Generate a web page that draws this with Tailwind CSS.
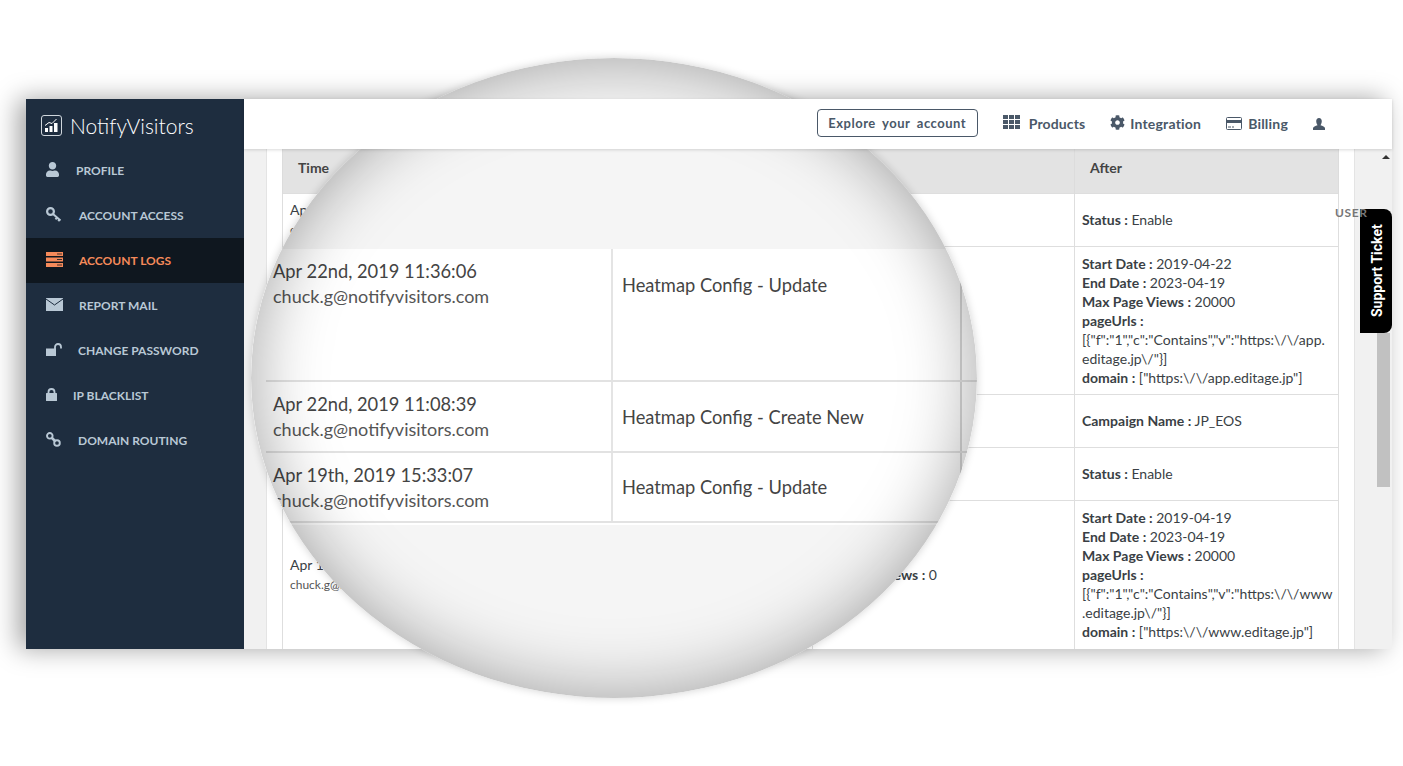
<!DOCTYPE html>
<html lang="en">
<head>
    <meta charset="UTF-8">
    <title>NotifyVisitors - Account Logs</title>
    <script src="https://cdn.jsdelivr.net/npm/@tailwindcss/browser@4"></script>
</head>
<body class="bg-white font-['Lato','Liberation_Sans',sans-serif] text-[#333]">
<div class="relative w-[1403px] h-[766px] overflow-hidden pt-[99px] pl-[26px]">

    <!-- app window -->
    <div class="relative flex w-[1366px] h-[550px] bg-white shadow-[-8px_0_24px_rgba(0,0,0,0.36)]">

        <!-- sidebar -->
        <aside class="w-[218px] shrink-0 bg-[#1e2d3f] text-[#b9c8d5]">
            <div class="flex items-center h-[49px] pl-[15px] pt-[3px]">
                <svg class="w-[21px] h-[21px]" viewBox="0 0 21 21" fill="none">
                    <rect x="0.5" y="0.5" width="20" height="20" rx="2.5" stroke="#cfd6dc"/>
                    <path d="M4 17h3v-4H4zM8.500 17h3v-6h-3zM13 17h3.500V8H13z" fill="#fff"/>
                    <path d="M4 10.500l4-3 3 1 4.500-4.500" stroke="#fff"/>
                </svg>
                <span class="ml-[8px] text-[21px] font-light text-white leading-none">NotifyVisitors</span>
            </div>
            <nav class="text-[12px] font-bold">
                <a class="flex items-center h-[45px] pl-[20px]">
                    <svg class="w-[13px] h-[15px] -mt-[3px]" viewBox="0 0 448 512" fill="#b9c8d5"><path d="M224 256c70.700 0 128-57.300 128-128S294.700 0 224 0 96 57.300 96 128s57.300 128 128 128zm89.600 32h-16.700c-22.200 10.200-46.900 16-72.900 16s-50.600-5.800-72.900-16h-16.700C60.200 288 0 348.200 0 422.400V464c0 26.500 21.500 48 48 48h352c26.500 0 48-21.500 48-48v-41.600c0-74.200-60.200-134.400-134.400-134.400z"/></svg>
                    <span class="ml-[17px]">PROFILE</span>
                </a>
                <a class="flex items-center h-[45px] pl-[20px]">
                    <svg class="w-[16px] h-[15px] -mt-[3px]" viewBox="0 0 16 15" fill="none" stroke="#b9c8d5"><circle cx="4.500" cy="4.500" r="3.400" stroke-width="2.200"/><path d="M7 7l7.500 6.500M11 10.500l-1.500 1.800M13.500 12.500l-1.300 1.500" stroke-width="2"/></svg>
                    <span class="ml-[17px]">ACCOUNT ACCESS</span>
                </a>
                <a class="flex items-center h-[45px] pl-[20px] bg-[#0f171f] text-[#f58a5a]">
                    <svg class="w-[17px] h-[15px] -mt-[3px]" viewBox="0 0 17 15" fill="#f58a5a"><path d="M0 0h17v4H0zM0 5.500h17v4H0zM0 11h17v4H0z"/><path d="M11 2h5M11 7.500h5M11 13h5" stroke="#0f171f" stroke-width="0.800"/></svg>
                    <span class="ml-[16px]">ACCOUNT LOGS</span>
                </a>
                <a class="flex items-center h-[45px] pl-[20px]">
                    <svg class="w-[17px] h-[13px] -mt-[3px]" viewBox="0 0 17 13" fill="#b9c8d5"><rect width="17" height="13"/><path d="M0 1l8.500 6L17 1" fill="none" stroke="#1e2d3f"/></svg>
                    <span class="ml-[16px]">REPORT MAIL</span>
                </a>
                <a class="flex items-center h-[45px] pl-[20px]">
                    <svg class="w-[16px] h-[13px] -mt-[3px]" viewBox="0 0 16 13"><rect y="5.500" width="10" height="7.500" fill="#b9c8d5"/><path d="M9 6V4a3 3 0 0 1 6 0v1.500" fill="none" stroke="#b9c8d5" stroke-width="1.800"/></svg>
                    <span class="ml-[16px]">CHANGE PASSWORD</span>
                </a>
                <a class="flex items-center h-[45px] pl-[20px]">
                    <svg class="w-[11px] h-[13px] -mt-[3px]" viewBox="0 0 11 13"><rect y="5" width="11" height="8" rx="0.500" fill="#b9c8d5"/><path d="M2.500 6V4a3 3 0 0 1 6 0v2" fill="none" stroke="#b9c8d5" stroke-width="1.800"/></svg>
                    <span class="ml-[16px]">IP BLACKLIST</span>
                </a>
                <a class="flex items-center h-[45px] pl-[20px]">
                    <svg class="w-[15px] h-[15px] -mt-[3px]" viewBox="0 0 15 15" fill="none" stroke="#b9c8d5" stroke-width="1.900"><circle cx="3.800" cy="3.800" r="2.800"/><circle cx="11" cy="11" r="2.800"/><path d="M5.500 5.500l4 4" stroke-width="2.500"/></svg>
                    <span class="ml-[17px]">DOMAIN ROUTING</span>
                </a>
            </nav>
        </aside>

        <!-- right side -->
        <div class="flex-1 flex flex-col min-w-0">
            <header class="relative z-10 flex items-center justify-end h-[50px] shrink-0 bg-white shadow-[0_1px_3px_rgba(0,0,0,0.15)] text-[14px] font-bold text-[#4a5868] pr-[67px] pb-[2px]">
                <button class="h-[28px] w-[161px] pt-[2px] border border-[#4a5868] rounded-[4px] text-[13px] tracking-[0.5px] [word-spacing:3px]">Explore your account</button>
                <svg class="ml-[25px] w-[17px] h-[14px] -mt-[3px]" viewBox="0 0 17 14" fill="#4a5868"><path d="M0 0h5v4H0zM6 0h5v4H6zM12 0h5v4h-5zM0 5h5v4H0zM6 5h5v4H6zM12 5h5v4h-5zM0 10h5v4H0zM6 10h5v4H6zM12 10h5v4h-5z"/></svg>
                <span class="ml-[9px] tracking-[0.12px]">Products</span>
                <svg class="ml-[25px] w-[15px] h-[15px] -mt-[2px]" viewBox="0 0 512 512" fill="#4a5868"><path d="M487.400 315.700l-42.600-24.600c4.300-23.200 4.300-47 0-70.200l42.600-24.600c4.900-2.800 7.100-8.600 5.500-14-11.100-35.600-30-67.800-54.700-94.600-3.800-4.100-10-5.100-14.800-2.300L380.800 110c-17.900-15.400-38.500-27.300-60.800-35.100V25.800c0-5.600-3.900-10.500-9.400-11.700-36.700-8.200-74.300-7.800-109.200 0-5.500 1.200-9.400 6.100-9.400 11.700V75c-22.200 7.900-42.800 19.800-60.800 35.100L88.700 85.500c-4.900-2.800-11-1.900-14.800 2.300-24.700 26.700-43.600 58.900-54.700 94.600-1.700 5.400.6 11.200 5.500 14L67.300 221c-4.300 23.200-4.300 47 0 70.200l-42.600 24.600c-4.900 2.800-7.100 8.600-5.500 14 11.100 35.600 30 67.800 54.700 94.600 3.800 4.100 10 5.100 14.800 2.300l42.600-24.600c17.900 15.400 38.500 27.300 60.800 35.100v49.200c0 5.600 3.900 10.500 9.400 11.700 36.700 8.200 74.300 7.800 109.200 0 5.500-1.200 9.400-6.100 9.400-11.700v-49.200c22.200-7.900 42.800-19.800 60.800-35.100l42.600 24.600c4.900 2.800 11 1.900 14.800-2.300 24.700-26.700 43.600-58.900 54.700-94.600 1.500-5.500-.7-11.300-5.600-14.100zM256 336c-44.100 0-80-35.900-80-80s35.900-80 80-80 80 35.900 80 80-35.900 80-80 80z"/></svg>
                <span class="ml-[5px] tracking-[0.2px]">Integration</span>
                <svg class="ml-[25px] w-[16px] h-[13px] mt-[1px]" viewBox="0 0 16 13" fill="none"><rect x="0.500" y="0.500" width="15" height="12" rx="1" stroke="#4a5868"/><path d="M0 3h16v3H0z" fill="#4a5868"/><path d="M2 10h3M6 10h2" stroke="#4a5868"/></svg>
                <span class="ml-[6px] tracking-[0.2px]">Billing</span>
                <svg class="ml-[25px] w-[12px] h-[12px] mt-[1px]" viewBox="0 0 12 12" fill="#4a5868"><path d="M6 0c1.800 0 2.800 1.300 2.800 3.200S7.800 6.500 7.500 7.300c2 .6 4.500 1.500 4.500 3V12H0v-1.700c0-1.500 2.500-2.400 4.500-3C4.200 6.500 3.200 5 3.200 3.200S4.200 0 6 0z"/></svg>
            </header>

            <div class="flex flex-1 min-h-0 overflow-hidden">
                <div class="w-[23px] shrink-0 bg-[#f1f1f1] border-r border-[#e4e4e4]"></div>
                <div class="w-[1087px] shrink-0 bg-white pl-[15px]">
                    <table class="table-fixed border-collapse w-[1056px] text-[14px] leading-[19px] text-[#3a3f45]">
                        <colgroup><col class="w-[300px]"><col class="w-[230px]"><col class="w-[262px]"><col class="w-[264px]"></colgroup>
                        <thead>
                            <tr class="h-[44px] bg-[#e3e3e3] font-bold text-[#444]">
                                <th class="px-[15px] pb-[6px] text-left border-x border-[#dcdcdc]">Time</th>
                                <th class="border-x border-[#dcdcdc]"></th>
                                <th class="border-x border-[#dcdcdc]"></th>
                                <th class="px-[15px] pb-[6px] text-left border-x border-[#dcdcdc]">After</th>
                            </tr>
                        </thead>
                        <tbody>
                            <tr class="h-[53px]">
                                <td class="px-[7px] border border-[#dedede]">Apr<br><span class="text-[12px] text-[#555]">chuck.g@</span></td>
                                <td class="border border-[#dedede]"></td>
                                <td class="border border-[#dedede]"></td>
                                <td class="px-[7px] border border-[#dedede]"><b>Status :</b> Enable</td>
                            </tr>
                            <tr class="h-[148px]">
                                <td class="border border-[#dedede]"></td>
                                <td class="border border-[#dedede]"></td>
                                <td class="border border-[#dedede]"></td>
                                <td class="px-[7px] border border-[#dedede]"><b>Start Date :</b> 2019-04-22<br><b>End Date :</b> 2023-04-19<br><b>Max Page Views :</b> 20000<br><b>pageUrls :</b><br>[{"f":"1","c":"Contains","v":"https:\/\/app.<br>editage.jp\/"}]<br><b>domain :</b> ["https:\/\/app.editage.jp"]</td>
                            </tr>
                            <tr class="h-[53px]">
                                <td class="border border-[#dedede]"></td>
                                <td class="border border-[#dedede]"></td>
                                <td class="border border-[#dedede]"></td>
                                <td class="px-[7px] border border-[#dedede]"><b>Campaign Name :</b> JP_EOS</td>
                            </tr>
                            <tr class="h-[53px]">
                                <td class="border border-[#dedede]"></td>
                                <td class="border border-[#dedede]"></td>
                                <td class="border border-[#dedede]"></td>
                                <td class="px-[7px] border border-[#dedede]"><b>Status :</b> Enable</td>
                            </tr>
                            <tr class="h-[150px]">
                                <td class="px-[7px] pb-[2px] border border-b-0 border-[#dedede]">Apr 19th, 2019 15:30:41<br><span class="text-[12px] text-[#555]">chuck.g@notifyvisitors.com</span></td>
                                <td class="border border-b-0 border-[#dedede]"></td>
                                <td class="pb-[2px] border border-b-0 border-[#dedede] text-right pr-[137px] whitespace-nowrap"><b>Max Page Views :</b> 0</td>
                                <td class="px-[7px] pb-[2px] border border-b-0 border-[#dedede]"><b>Start Date :</b> 2019-04-19<br><b>End Date :</b> 2023-04-19<br><b>Max Page Views :</b> 20000<br><b>pageUrls :</b><br>[{"f":"1","c":"Contains","v":"https:\/\/www<br>.editage.jp\/"}]<br><b>domain :</b> ["https:\/\/www.editage.jp"]</td>
                            </tr>
                        </tbody>
                    </table>
                </div>
                <!-- scrollbar gutter -->
                <div class="flex-1 bg-[#f1f1f1] border-l border-[#e4e4e4] flex justify-end pr-[2px]">
                    <div class="relative w-[13px]">
                        <div class="absolute left-[5px] top-[6px] w-0 h-0 border-x-[4px] border-x-transparent border-b-[4px] border-b-[#333]"></div>
                        <div class="absolute left-0 top-[184px] w-[13px] h-[154px] bg-[#c1c1c1]"></div>
                    </div>
                </div>
            </div>
        </div>

        <!-- overlays on the right edge -->
        <a class="absolute right-0 top-[110px] flex items-center justify-center w-[32px] h-[124px] pr-[2px] bg-black text-white rounded-l-[8px] font-['Roboto',sans-serif] text-[14px] font-bold [writing-mode:vertical-rl] rotate-180">Support Ticket</a>
        <span class="absolute left-[1309px] top-[105px] text-[12px] font-bold text-[#777] tracking-[0.6px]">USER</span>
    </div>

    <!-- magnifier lens -->
    <div class="absolute left-[251px] top-[58px] w-[726px] h-[640px] rounded-[50%] overflow-hidden bg-[#f5f5f5] shadow-[0_0_8px_rgba(0,0,0,0.18)]">
        <div class="absolute left-0 top-[191px] w-full h-[276px] bg-white pl-[15px] text-[#444]">
            <div class="flex h-[133px] border-b-2 border-[#e2e2e2]">
                <div class="w-[347px] border-r-2 border-[#e4e4e4] pl-[7px] pt-[10px]">
                    <p class="text-[18.300px] leading-[24px]">Apr 22nd, 2019 11:36:06</p>
                    <p class="text-[18px] leading-[27px] text-[#555]">chuck.g@notifyvisitors.com</p>
                </div>
                <div class="w-[349px] border-r-2 border-[#d8d8d8] pl-[9px] pt-[24px] text-[18.300px] leading-[24px]">Heatmap Config - Update</div>
            </div>
            <div class="flex h-[71px] border-b-2 border-[#e2e2e2]">
                <div class="w-[347px] border-r-2 border-[#e4e4e4] pl-[7px] pt-[10px]">
                    <p class="text-[18.300px] leading-[24px]">Apr 22nd, 2019 11:08:39</p>
                    <p class="text-[18px] leading-[27px] text-[#555]">chuck.g@notifyvisitors.com</p>
                </div>
                <div class="w-[349px] border-r-2 border-[#d8d8d8] pl-[9px] pt-[23px] text-[18.300px] leading-[24px]">Heatmap Config - Create New</div>
            </div>
            <div class="flex h-[70px] border-b-2 border-[#e2e2e2]">
                <div class="w-[347px] border-r-2 border-[#e4e4e4] pl-[7px] pt-[10px]">
                    <p class="text-[18.300px] leading-[24px]">Apr 19th, 2019 15:33:07</p>
                    <p class="text-[18px] leading-[26px] text-[#555]">chuck.g@notifyvisitors.com</p>
                </div>
                <div class="w-[349px] border-r-2 border-[#d8d8d8] pl-[9px] pt-[22px] text-[18.300px] leading-[24px]">Heatmap Config - Update</div>
            </div>
        </div>
        <div class="absolute inset-0 rounded-[50%] shadow-[inset_0_0_70px_rgba(0,0,0,0.36)]"></div>
    </div>
</div>
</body>
</html>
